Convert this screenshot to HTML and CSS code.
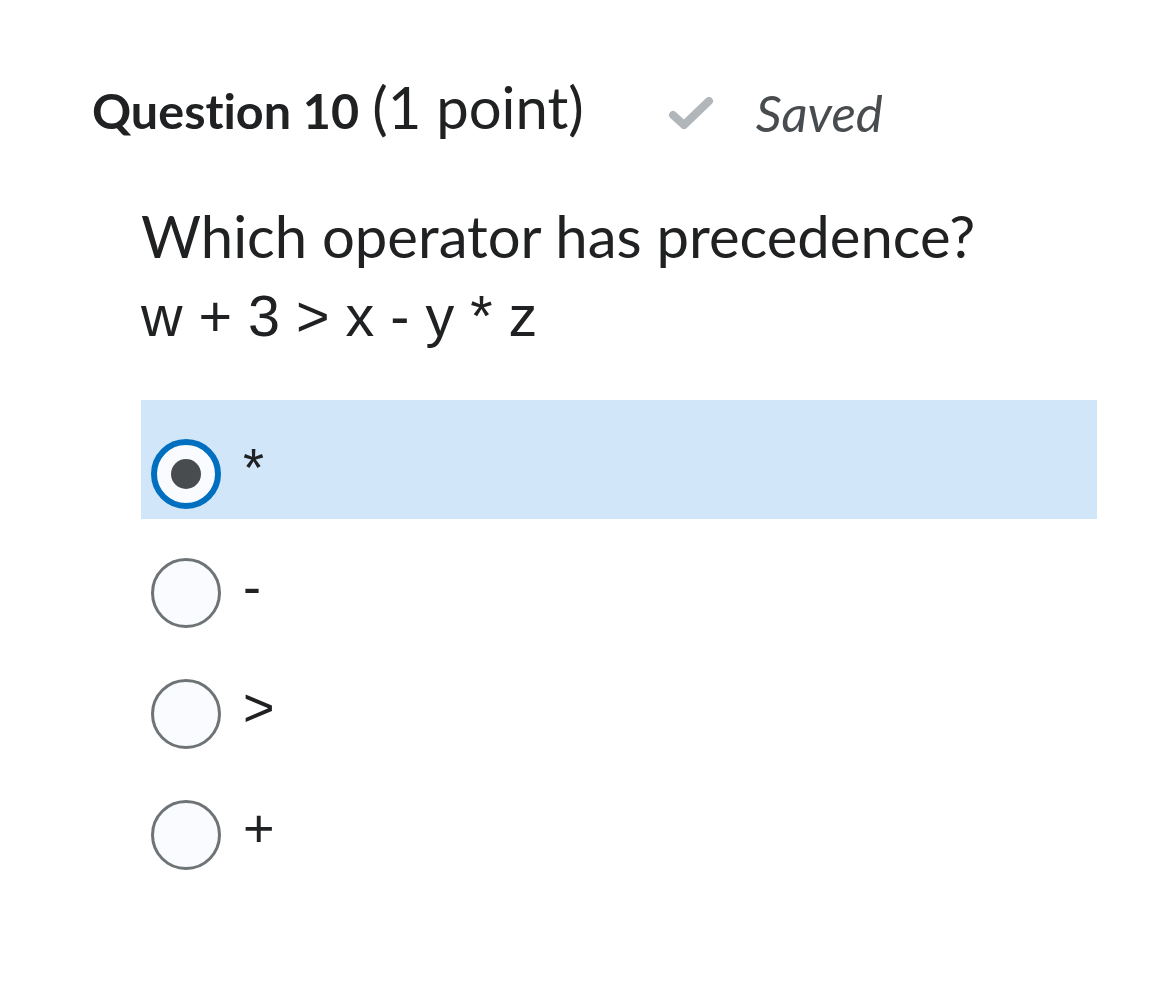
FILE: index.html
```html
<!DOCTYPE html>
<html lang="en">
<head>
<meta charset="utf-8">
<title>Question 10</title>
<link rel="stylesheet" href="styles.css">
</head>
<body>
<main class="page">
  <header class="qhead">
    <h2 class="qtitle"><span class="qnum">Question 10</span> <span class="qpts">(1 point)</span></h2>
    <div class="saved">
      <svg class="check" width="46" height="32" viewBox="0 0 46 32" aria-hidden="true">
        <path d="M5 18 L16 28 L41 4" fill="none" stroke="#b1b6ba" stroke-width="8" stroke-linecap="round" stroke-linejoin="round"/>
      </svg>
      <span class="saved-text">Saved</span>
    </div>
  </header>
  <section class="qbody">
    <p class="prompt">Which operator has precedence?</p>
    <p class="expr">w + 3 &gt; x - y * z</p>
    <ul class="options">
      <li class="option selected">
        <svg class="radio" width="74" height="74" viewBox="0 0 74 74" aria-hidden="true">
          <circle cx="37" cy="37" r="32" fill="#f9fbff" stroke="#006fbf" stroke-width="6"/>
          <circle cx="37" cy="37" r="15" fill="#494c4e"/>
        </svg>
        <span class="label">*</span>
      </li>
      <li class="option">
        <svg class="radio" width="74" height="74" viewBox="0 0 74 74" aria-hidden="true">
          <circle cx="37" cy="37" r="33.5" fill="#f9fbff" stroke="#6e7376" stroke-width="3"/>
        </svg>
        <span class="label">-</span>
      </li>
      <li class="option">
        <svg class="radio" width="74" height="74" viewBox="0 0 74 74" aria-hidden="true">
          <circle cx="37" cy="37" r="33.5" fill="#f9fbff" stroke="#6e7376" stroke-width="3"/>
        </svg>
        <span class="label">&gt;</span>
      </li>
      <li class="option">
        <svg class="radio" width="74" height="74" viewBox="0 0 74 74" aria-hidden="true">
          <circle cx="37" cy="37" r="33.5" fill="#f9fbff" stroke="#6e7376" stroke-width="3"/>
        </svg>
        <span class="label">+</span>
      </li>
    </ul>
  </section>
</main>
</body>
</html>
```
FILE: styles.css
```css
html, body {
  margin: 0;
  padding: 0;
  background: #ffffff;
}
body {
  font-family: Lato, "Liberation Sans", Arial, sans-serif;
  color: #202122;
  font-variant-ligatures: none;
}
.page {
  padding: 72px 0 0 92px;
}
.qhead {
  display: flex;
  align-items: baseline;
  gap: 84px;
  height: 70px;
}
.qtitle {
  margin: 0;
  font-weight: 400;
  white-space: nowrap;
  line-height: 70px;
}
.qnum {
  font-weight: 700;
  font-size: 48.5px;
  margin-right: 7px;
}
.qpts {
  font-size: 58px;
}
.saved {
  display: flex;
  align-items: center;
  gap: 42px;
}
.check {
  display: block;
}
.saved-text {
  font-style: italic;
  font-size: 51px;
  color: #494c4e;
  line-height: 70px;
}
.qbody {
  padding-left: 49px;
  padding-top: 54px;
}
.prompt {
  margin: 0;
  font-size: 58px;
  line-height: 80px;
  color: #202122;
}
.expr {
  margin: 0;
  font-family: "Liberation Sans", Arial, sans-serif;
  font-size: 57.5px;
  line-height: 80px;
  color: #202122;
}
.options {
  list-style: none;
  margin: 44px 0 0 0;
  padding: 0;
  width: 956px;
}
.option {
  display: flex;
  align-items: flex-start;
  height: 121px;
  box-sizing: border-box;
  padding: 37px 0 0 8px;
  gap: 20px;
}
.option.selected {
  background: #d1e6f9;
  height: 119px;
}
.radio {
  display: block;
  flex: none;
}
.label {
  font-family: "Liberation Sans", Arial, sans-serif;
  font-size: 54px;
  line-height: 60px;
  color: #202122;
}
```
